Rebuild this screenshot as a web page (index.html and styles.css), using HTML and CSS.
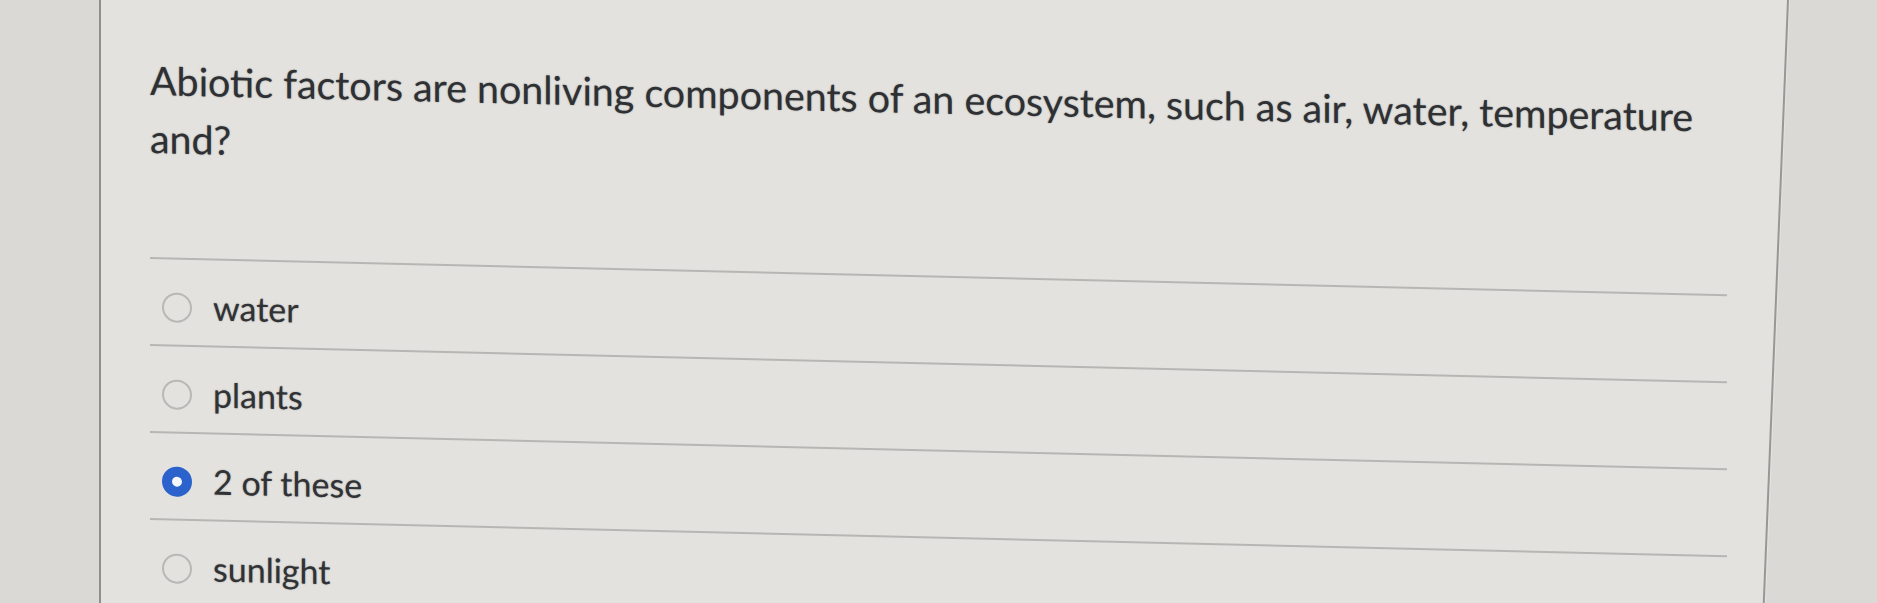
FILE: index.html
```html
<!DOCTYPE html>
<html lang="en">
<head>
<meta charset="utf-8">
<title>Question</title>
<link rel="stylesheet" href="styles.css">
</head>
<body>
<div class="screen">
  <div class="card">
    <div class="content">
      <p class="question">Abiotic factors are nonliving components of an ecosystem, such as air, water, temperature and?</p>
      <div class="answers">
        <div class="answer"><span class="radio"></span><span class="text">water</span></div>
        <div class="answer"><span class="radio"></span><span class="text">plants</span></div>
        <div class="answer"><span class="radio checked"></span><span class="text">2 of these</span></div>
        <div class="answer"><span class="radio"></span><span class="text">sunlight</span></div>
      </div>
    </div>
  </div>
</div>
</body>
</html>
```

FILE: styles.css
```css
html, body {
  margin: 0;
  height: 100%;
}

body {
  background: #dad9d6;
  font-family: Lato, "Open Sans", "Liberation Sans", sans-serif;
  overflow: hidden;
}

.screen {
  display: flex;
  height: 603px;
  padding-left: 99px;
  overflow: hidden;
}

.card {
  position: relative;
  width: 1691px;
  height: 603px;
  box-sizing: border-box;
  border-left: 2px solid #8f8f8e;
  background: #e3e2de;
  padding-left: 49px;
  overflow: hidden;
  clip-path: polygon(0 0, 100% 0, calc(100% - 24px) 100%, 0 100%);
}

.card::after {
  content: "";
  position: absolute;
  top: 0;
  right: 1px;
  width: 2px;
  height: 603px;
  background: #979796;
  transform: skewX(-2.3deg);
  transform-origin: 0 0;
}

.content {
  width: 1577px;
  transform: skewY(1.35deg);
  transform-origin: 0 0;
}

.question {
  margin: 0;
  padding-top: 51px;
  width: 1575px;
  font-size: 39.4px;
  line-height: 58px;
  color: #2e3033;
  text-shadow: 0 0 1.5px rgba(35, 37, 40, 0.45);
}

.answers {
  margin-top: 90px;
}

.answer {
  display: flex;
  align-items: flex-start;
  height: 87px;
  box-sizing: border-box;
  border-top: 2px solid #b6b6b4;
  padding: 24px 0 0 12px;
}

.answer:last-child {
  height: 80px;
}

.radio {
  flex: none;
  width: 30px;
  height: 30px;
  box-sizing: border-box;
  border-radius: 50%;
  border: 2px solid #b8b8b6;
  margin-top: 9px;
}

.radio.checked {
  border: 10px solid #2b62cb;
  background: #f4f6fb;
}

.text {
  margin-left: 21px;
  font-size: 34px;
  line-height: 45px;
  color: #313235;
  text-shadow: 0 0 1.5px rgba(35, 37, 40, 0.45);
}
```
